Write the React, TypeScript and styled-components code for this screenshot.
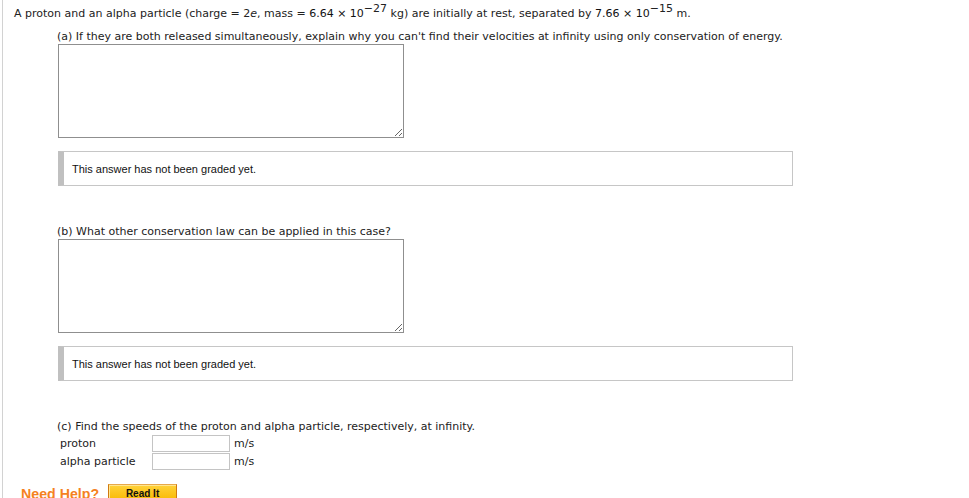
import * as React from "react";
import styled, { createGlobalStyle } from "styled-components";

const GlobalStyle = createGlobalStyle`
  html, body {
    margin: 0;
    padding: 0;
    background: #fff;
  }
  body {
    font-family: "DejaVu Sans", Verdana, sans-serif;
    font-size: 11px;
    color: #222;
  }
`;

const parts = [
  {
    key: "a",
    label:
      "(a) If they are both released simultaneously, explain why you can't find their velocities at infinity using only conservation of energy.",
  },
  {
    key: "b",
    label: "(b) What other conservation law can be applied in this case?",
  },
];

const speeds = ["proton", "alpha particle"];

const App = () => {
  return (
    <>
      <GlobalStyle />
      <SPage>
        <SQuestion>
          A proton and an alpha particle (charge = 2<i>e</i>, mass ={" "}
          <SNum>6.64 × 10</SNum>
          <SSup>−27</SSup> kg) are initially at rest, separated by{" "}
          <SNum>7.66 × 10</SNum>
          <SSup>−15</SSup> m.
        </SQuestion>

        {parts.map((part) => (
          <SPart key={part.key}>
            <SPartLabel>{part.label}</SPartLabel>
            <SEssay />
            <SGraded>This answer has not been graded yet.</SGraded>
          </SPart>
        ))}

        <SPart>
          <SPartLabel>
            (c) Find the speeds of the proton and alpha particle, respectively, at infinity.
          </SPartLabel>
          <SSpeeds>
            {speeds.map((s) => (
              <SSpeedRow key={s}>
                <SSpeedName>{s}</SSpeedName>
                <SSpeedInput type="text" />
                <SUnit>m/s</SUnit>
              </SSpeedRow>
            ))}
          </SSpeeds>
        </SPart>

        <SHelp>
          <SHelpTitle>Need Help?</SHelpTitle>
          <SReadIt>Read It</SReadIt>
        </SHelp>
      </SPage>
    </>
  );
};

export default App;

const SPage = styled.div`
  margin-left: 2px;
  border-left: 1px solid #d2d2d2;
  padding: 5px 0 20px 11px;
  min-height: 498px;
  box-sizing: border-box;
`;

const SQuestion = styled.div`
  line-height: 17px;
  white-space: nowrap;
`;

const SNum = styled.span`
  color: #111;
`;

const SSup = styled.sup`
  font-size: 11px;
  line-height: 0;
  vertical-align: 5px;
`;

const SPart = styled.div`
  margin-left: 43px;
  margin-top: 6px;

  & + & {
    margin-top: 37px;
  }
`;

const SPartLabel = styled.div`
  line-height: 16px;
  padding-top: 1px;
  height: 16px;
  box-sizing: border-box;
  white-space: nowrap;
`;

const SEssay = styled.textarea`
  display: block;
  width: 346px;
  height: 94px;
  margin: 0 0 0 1px;
  box-sizing: border-box;
  border: 1px solid #8f8f8f;
  border-radius: 0;
  padding: 2px;
  font-family: inherit;
  font-size: 11px;
  outline: none;
`;

const SGraded = styled.div`
  margin: 13px 0 0 1px;
  width: 735px;
  height: 35px;
  box-sizing: border-box;
  border: 1px solid #c6c6c6;
  border-left: 6px solid #c0c0c0;
  padding-left: 8px;
  display: flex;
  align-items: center;
  font-family: "Liberation Sans", Arial, Helvetica, sans-serif;
  font-size: 11px;
  color: #111;
`;

const SSpeeds = styled.div`
  display: flex;
  flex-direction: column;
  gap: 2px;
  margin-top: 1px;
  padding-left: 3px;
`;

const SSpeedRow = styled.div`
  display: flex;
  align-items: center;
  height: 16px;
`;

const SSpeedName = styled.span`
  width: 92px;
  line-height: 16px;
  padding-top: 1px;
`;

const SSpeedInput = styled.input`
  width: 78px;
  height: 17px;
  box-sizing: border-box;
  border: 1px solid #c4c4c4;
  margin: 0;
  padding: 0 2px;
  font-family: inherit;
  font-size: 11px;
  outline: none;
`;

const SUnit = styled.span`
  margin-left: 4px;
  line-height: 16px;
  padding-top: 1px;
`;

const SHelp = styled.div`
  display: flex;
  align-items: flex-start;
  gap: 9px;
  margin: 15px 0 0 7px;
`;

const SHelpTitle = styled.span`
  font-family: "Liberation Sans", Arial, Helvetica, sans-serif;
  font-size: 14.2px;
  font-weight: bold;
  color: #f5821f;
  line-height: 17px;
  margin-top: 2px;
`;

const SReadIt = styled.button`
  width: 69px;
  height: 18px;
  margin: 0;
  padding: 0;
  border: 1px solid #d07a10;
  border-top-color: #e7a84a;
  background: linear-gradient(#ffd23a, #f9b800);
  box-shadow: inset 1px 1px 0 #ffe690;
  font-family: "Liberation Sans", Arial, Helvetica, sans-serif;
  font-size: 10px;
  font-weight: bold;
  color: #111;
  line-height: 18px;
  cursor: pointer;
`;
